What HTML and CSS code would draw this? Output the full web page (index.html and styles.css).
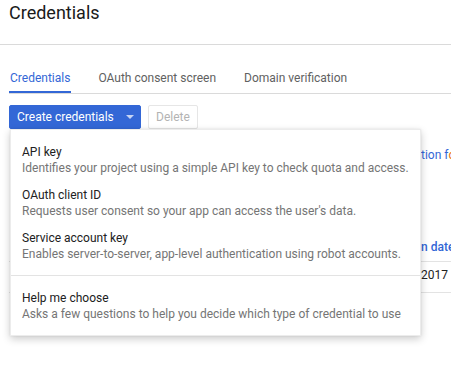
FILE: index.html
```html
<!DOCTYPE html>
<html lang="en">
<head>
<meta charset="utf-8">
<title>Credentials</title>
<link rel="stylesheet" href="styles.css">
</head>
<body>
<div class="page">
  <header class="header">
    <h1 class="title">Credentials</h1>
  </header>
  <nav class="tabs">
    <a class="tab tab-active">Credentials</a>
    <a class="tab">OAuth consent screen</a>
    <a class="tab">Domain verification</a>
  </nav>
  <div class="toolbar">
    <button class="btn btn-primary"><span class="btn-label">Create credentials</span><span class="caret"></span></button>
    <button class="btn btn-disabled">Delete</button>
    <div class="menu">
      <div class="menu-section">
        <div class="menu-item">
          <div class="item-title">API key</div>
          <div class="item-desc">Identifies your project using a simple API key to check quota and access.</div>
        </div>
        <div class="menu-item">
          <div class="item-title">OAuth client ID</div>
          <div class="item-desc">Requests user consent so your app can access the user's data.</div>
        </div>
        <div class="menu-item">
          <div class="item-title">Service account key</div>
          <div class="item-desc">Enables server-to-server, app-level authentication using robot accounts.</div>
        </div>
      </div>
      <div class="menu-section menu-section-last">
        <div class="menu-item">
          <div class="item-title">Help me choose</div>
          <div class="item-desc">Asks a few questions to help you decide which type of credential to use</div>
        </div>
      </div>
    </div>
  </div>
  <p class="intro"><span class="link">tion f</span><span class="hl">or</span> details.</p>
  <div class="grid">
    <div class="row row-head">
      <div class="cell"></div>
      <div class="cell cell-sort">n date</div>
    </div>
    <div class="row row-data">
      <div class="cell"></div>
      <div class="cell">2017</div>
    </div>
  </div>
</div>
</body>
</html>
```
FILE: styles.css
```css
* { box-sizing: border-box; }
html, body {
  margin: 0;
  padding: 0;
  background: #fff;
  overflow: hidden;
}
body {
  font-family: Roboto, "Liberation Sans", Arial, sans-serif;
  font-size: 12px;
  line-height: 16px;
  color: #212121;
  width: 451px;
  height: 379px;
}
.page { width: 451px; }
.header {
  height: 45px;
  border-bottom: 1px solid #dadada;
  padding-left: 9px;
}
.title {
  margin: 0;
  font-size: 18px;
  line-height: 26px;
  font-weight: 400;
  color: #1a1a1a;
}
.tabs {
  display: flex;
  gap: 26px;
  margin-left: 9px;
  padding-top: 25px;
  border-bottom: 1px solid #dadada;
}
.tab {
  display: block;
  padding: 0 1px 5px;
  border-bottom: 2px solid transparent;
  color: #616161;
  white-space: nowrap;
}
.tab-active {
  color: #3367d6;
  border-bottom-color: #3367d6;
}
.toolbar {
  position: relative;
  display: flex;
  gap: 7px;
  margin: 11px 0 0 9px;
}
.btn {
  font-family: inherit;
  font-size: 12px;
  line-height: 16px;
  height: 24px;
  padding: 0 7px;
  border-radius: 2px;
  margin: 0;
  display: flex;
  align-items: center;
  white-space: nowrap;
}
.btn-primary {
  background: #3367d6;
  border: 1px solid #3367d6;
  color: #fff;
  width: 132px;
  gap: 12px;
}
.caret {
  width: 0;
  height: 0;
  border-left: 4px solid transparent;
  border-right: 4px solid transparent;
  border-top: 4px solid #c6d4f3;
}
.btn-disabled {
  background: #fff;
  border: 1px solid #e6e6e6;
  color: #b3b3b3;
  width: 50px;
  justify-content: center;
}
.menu {
  position: absolute;
  top: 100%;
  left: 1px;
  width: 411px;
  background: #fff;
  border: 1px solid #ececec;
  box-shadow: 0 3px 8px rgba(0, 0, 0, 0.2), 0 0 2px rgba(0, 0, 0, 0.08);
  z-index: 2;
}
.menu-section {
  padding: 8px 0;
  border-bottom: 1px solid #e3e3e3;
}
.menu-section-last { border-bottom: none; }
.menu-item {
  padding: 6px 11px 5px;
}
.item-title {
  color: #212121;
  white-space: nowrap;
}
.item-desc {
  color: #757575;
  white-space: nowrap;
}
.intro {
  margin: 18px 0 0 421px;
  white-space: nowrap;
  color: #212121;
}
.link { color: #3367d6; }
.hl { color: #e8710a; }
.grid { margin-top: 70px; margin-left: 9px; }
.row {
  display: grid;
  grid-template-columns: 412px 200px;
  border-bottom: 1px solid #e3e3e3;
  white-space: nowrap;
}
.row-head { padding: 6px 0 6px; }
.row-data { padding: 5px 0 9px; }
.cell-sort { color: #3367d6; font-weight: 500; }
```
